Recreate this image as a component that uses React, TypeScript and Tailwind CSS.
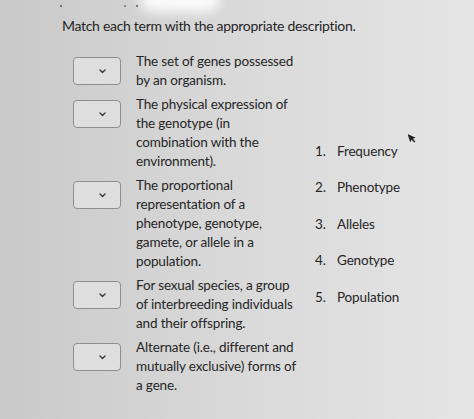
import React from 'react';

const rows: string[][] = [
  ['The set of genes possessed', 'by an organism.'],
  ['The physical expression of', 'the genotype (in', 'combination with the', 'environment).'],
  ['The proportional', 'representation of a', 'phenotype, genotype,', 'gamete, or allele in a', 'population.'],
  ['For sexual species, a group', 'of interbreeding individuals', 'and their offspring.'],
  ['Alternate (i.e., different and', 'mutually exclusive) forms of', 'a gene.'],
];

const terms = ['Frequency', 'Phenotype', 'Alleles', 'Genotype', 'Population'];

const SelectBox: React.FC = () => (
  <div className="mt-[5px] w-[48px] h-[28px] shrink-0 rounded-[4px] border border-[#8f8f8f] bg-[#dedede] flex items-center justify-end pr-[14px]">
    <svg width="7" height="5" viewBox="0 0 7 5" fill="none">
      <path d="M1 1 L3.5 3.5 L6 1" stroke="#3a3a3a" strokeWidth="1.4" strokeLinecap="round" strokeLinejoin="round" />
    </svg>
  </div>
);

export default function App() {
  return (
    <div
      className="relative w-full h-[419px] overflow-hidden bg-gradient-to-r from-[#c9c9c9] via-[#d9d9d9] to-[#e5e5e5] text-[#262626]"
      style={{ fontFamily: 'Lato, "Open Sans", sans-serif' }}
    >
      {/* glare and specks from the photo */}
      <div className="absolute -top-[14px] left-[140px] w-[80px] h-[26px] rounded-full bg-white/90 blur-[6px]"></div>
      <div className="absolute top-[5px] left-[60px] w-[2px] h-[2px] rounded-full bg-[#555]"></div>
      <div className="absolute top-[5px] left-[124px] w-[2px] h-[2px] rounded-full bg-[#777]"></div>
      <div className="absolute top-[5px] left-[136px] w-[2px] h-[2px] rounded-full bg-[#555]"></div>

      <div className="pt-[16px] pl-[62px]">
        <p className="text-[14px] leading-[20px] tracking-[-0.3px]">Match each term with the appropriate description.</p>

        <div className="mt-[16px] pl-[11px] flex items-center">
          <div className="flex flex-col gap-[5px]">
            {rows.map((lines, i) => (
              <div key={i} className="flex items-start gap-[15px]">
                <SelectBox />
                <div className="w-[162px] text-[13.5px] leading-[19px] tracking-[-0.15px]">
                  {lines.map((l, j) => (
                    <div key={j} className="whitespace-nowrap">{l}</div>
                  ))}
                </div>
              </div>
            ))}
          </div>

          <ol className="ml-[17px] flex flex-col gap-[16.5px] text-[13.5px] leading-[20px] tracking-[-0.15px]">
            {terms.map((t, i) => (
              <li key={t} className="flex">
                <span className="w-[22px]">{i + 1}.</span>
                <span>{t}</span>
              </li>
            ))}
          </ol>
        </div>
      </div>

      {/* mouse pointer */}
      <svg className="absolute left-[408px] top-[132px]" width="9" height="12" viewBox="0 0 9 12">
        <path d="M1 1 L1 9.5 L3.2 7.6 L4.8 11 L6.2 10.3 L4.6 7 L7.6 7 Z" fill="#222" transform="rotate(-18 4 6)" />
      </svg>
    </div>
  );
}
